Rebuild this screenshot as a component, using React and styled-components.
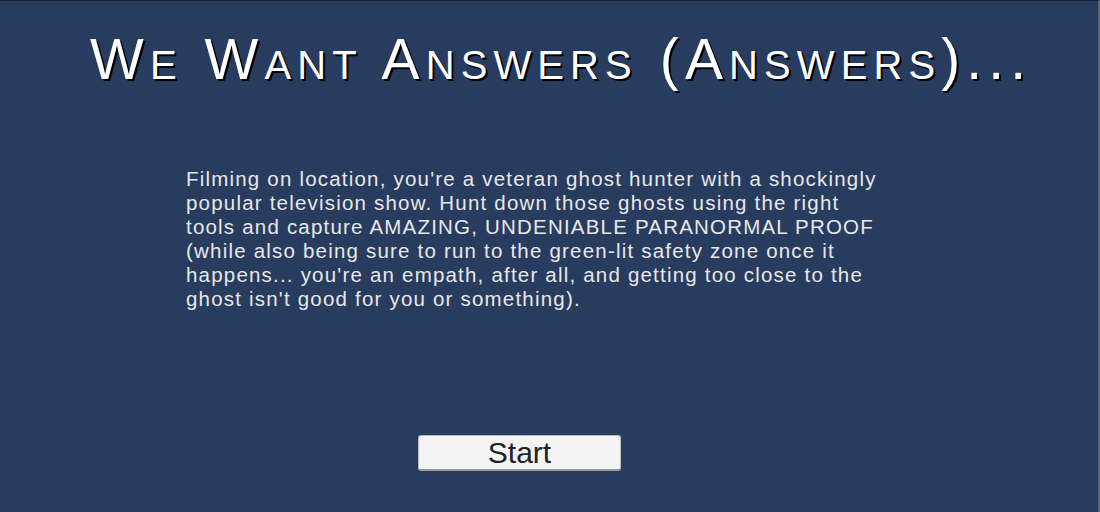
import React from "react";
import styled, { createGlobalStyle } from "styled-components";

const GlobalStyle = createGlobalStyle`
  html, body {
    margin: 0;
    padding: 0;
    background: #283c5f;
  }
`;

const Screen = styled.div`
  width: 1100px;
  height: 512px;
  box-sizing: border-box;
  background: #283c5f;
  border-top: 1px solid #1a2130;
  border-right: 2px solid #5a6170;
  display: flex;
  flex-direction: column;
  align-items: flex-start;
  font-family: "Liberation Sans", Arial, sans-serif;
  overflow: hidden;
`;

const Title = styled.h1`
  margin: 26px 0 0 90px;
  font-size: 57px;
  font-weight: normal;
  font-variant: small-caps;
  letter-spacing: 6.1px;
  line-height: 64px;
  color: #ffffff;
  text-shadow: 2px 2px 0 #000000;
  white-space: nowrap;
`;

const Blurb = styled.p`
  margin: 76px 0 0 186px;
  font-size: 20.5px;
  letter-spacing: 1.2px;
  line-height: 24px;
  color: #e8e8e8;
  white-space: nowrap;
`;

const StartButton = styled.button`
  margin: 124px 0 0 418px;
  width: 203px;
  height: 36px;
  box-sizing: border-box;
  background: #f4f4f4;
  border: 1px solid #b8b8b8;
  border-bottom: 2px solid #9a9a9a;
  border-radius: 3px;
  font-family: "Liberation Sans", Arial, sans-serif;
  font-size: 30px;
  line-height: 30px;
  color: #222222;
  padding: 0;
  cursor: pointer;
`;

const lines = [
  "Filming on location, you're a veteran ghost hunter with a shockingly",
  "popular television show. Hunt down those ghosts using the right",
  "tools and capture AMAZING, UNDENIABLE PARANORMAL PROOF",
  "(while also being sure to run to the green-lit safety zone once it",
  "happens... you're an empath, after all, and getting too close to the",
  "ghost isn't good for you or something).",
];

export default function App() {
  return (
    <>
      <GlobalStyle />
      <Screen>
        <Title>We Want Answers (Answers)...</Title>
        <Blurb>
          {lines.map((line, i) => (
            <React.Fragment key={i}>
              {line}
              {i < lines.length - 1 && <br />}
            </React.Fragment>
          ))}
        </Blurb>
        <StartButton>Start</StartButton>
      </Screen>
    </>
  );
}
